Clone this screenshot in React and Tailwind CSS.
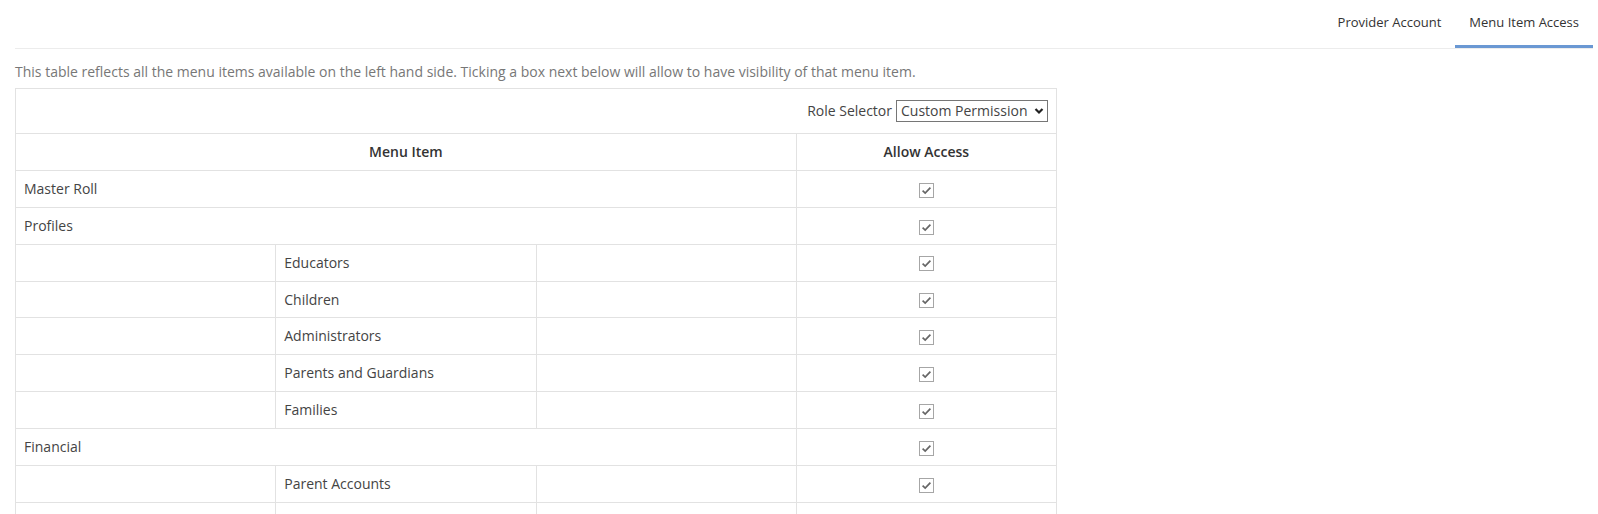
import React from "react";

const rows = [
  { name: "Master Roll", top: true },
  { name: "Profiles", top: true },
  { name: "Educators" },
  { name: "Children" },
  { name: "Administrators" },
  { name: "Parents and Guardians" },
  { name: "Families" },
  { name: "Financial", top: true },
  { name: "Parent Accounts" },
  { name: "", empty: true },
];

function Check() {
  return (
    <svg width="15" height="15" viewBox="0 0 15 15" className="inline-block align-middle">
      <rect x="0.5" y="0.5" width="14" height="14" fill="#ffffff" stroke="#a6a6a6" />
      <path d="M3.6 7.6 L6.2 10.1 L11.4 4.6" fill="none" stroke="#666666" strokeWidth="1.7" />
    </svg>
  );
}

const cell = "border border-[#e2e2e2] px-[8px] py-[8px] leading-[19.86px]";

export default function App() {
  return (
    <div
      className="h-[514px] overflow-hidden bg-white text-[14px] leading-[20px] text-[#444]"
      style={{ fontFamily: '"Open Sans", "Noto Sans", sans-serif' }}
    >
      <div className="ml-[15px] mr-[5px] flex justify-end border-b border-[#ececec]">
        <div className="px-[14px] pt-[12px] h-[48px] text-[13px] leading-[20px] text-[#333] border-b-[3px] border-transparent">
          Provider Account
        </div>
        <div className="px-[14px] pt-[12px] h-[48px] text-[13px] leading-[20px] text-[#333] border-b-[3px] border-[#6a98d3]">
          Menu Item Access
        </div>
      </div>

      <div className="px-[15px]">
        <p className="mt-[13px] mb-[6px] text-[#777]">
          This table reflects all the menu items available on the left hand side. Ticking a box next below will allow to have visibility of that menu item.
        </p>
        <table className="w-[1042px] table-fixed border-collapse border border-[#e2e2e2]">
          <colgroup>
            <col className="w-1/4" />
            <col className="w-1/4" />
            <col className="w-1/4" />
            <col className="w-1/4" />
          </colgroup>
          <tbody>
            <tr>
              <td colSpan={4} className="border border-[#e2e2e2] px-[8px] h-[45px] text-right align-middle">
                <div className="flex items-center justify-end gap-[4px]">
                  <span className="text-[#444]">Role Selector</span>
                  <div className="relative">
                    <select
                      defaultValue="custom"
                      className="block appearance-none h-[22px] w-[152px] border border-[#767676] bg-white pl-[4px] pr-[12px] text-[14px] leading-[18px] text-[#444] outline-none"
                      style={{ fontFamily: '"Open Sans", "Noto Sans", sans-serif' }}
                    >
                      <option value="custom">Custom Permission</option>
                      <option value="admin">Administrator</option>
                    </select>
                    <svg
                      width="10"
                      height="10"
                      viewBox="0 0 10 10"
                      className="pointer-events-none absolute right-[4px] top-[6px]"
                    >
                      <path d="M1.5 3 L5 6.5 L8.5 3" fill="none" stroke="#222" strokeWidth="2.2" />
                    </svg>
                  </div>
                </div>
              </td>
            </tr>
            <tr>
              <th colSpan={3} className="border border-[#e2e2e2] px-[8px] py-[8px] leading-[20px] text-center font-semibold text-[#333]">
                Menu Item
              </th>
              <th className="border border-[#e2e2e2] px-[8px] py-[8px] leading-[20px] text-center font-semibold text-[#333]">
                Allow Access
              </th>
            </tr>
            {rows.map((r, i) =>
              r.top ? (
                <tr key={i}>
                  <td colSpan={3} className={cell}>
                    {r.name}
                  </td>
                  <td className={`${cell} text-center`}>
                    <Check />
                  </td>
                </tr>
              ) : (
                <tr key={i}>
                  <td className={cell}>&nbsp;</td>
                  <td className={cell}>{r.empty ? "\u00a0" : r.name}</td>
                  <td className={cell}>&nbsp;</td>
                  <td className={`${cell} text-center`}>{r.empty ? "\u00a0" : <Check />}</td>
                </tr>
              )
            )}
          </tbody>
        </table>
      </div>
    </div>
  );
}
